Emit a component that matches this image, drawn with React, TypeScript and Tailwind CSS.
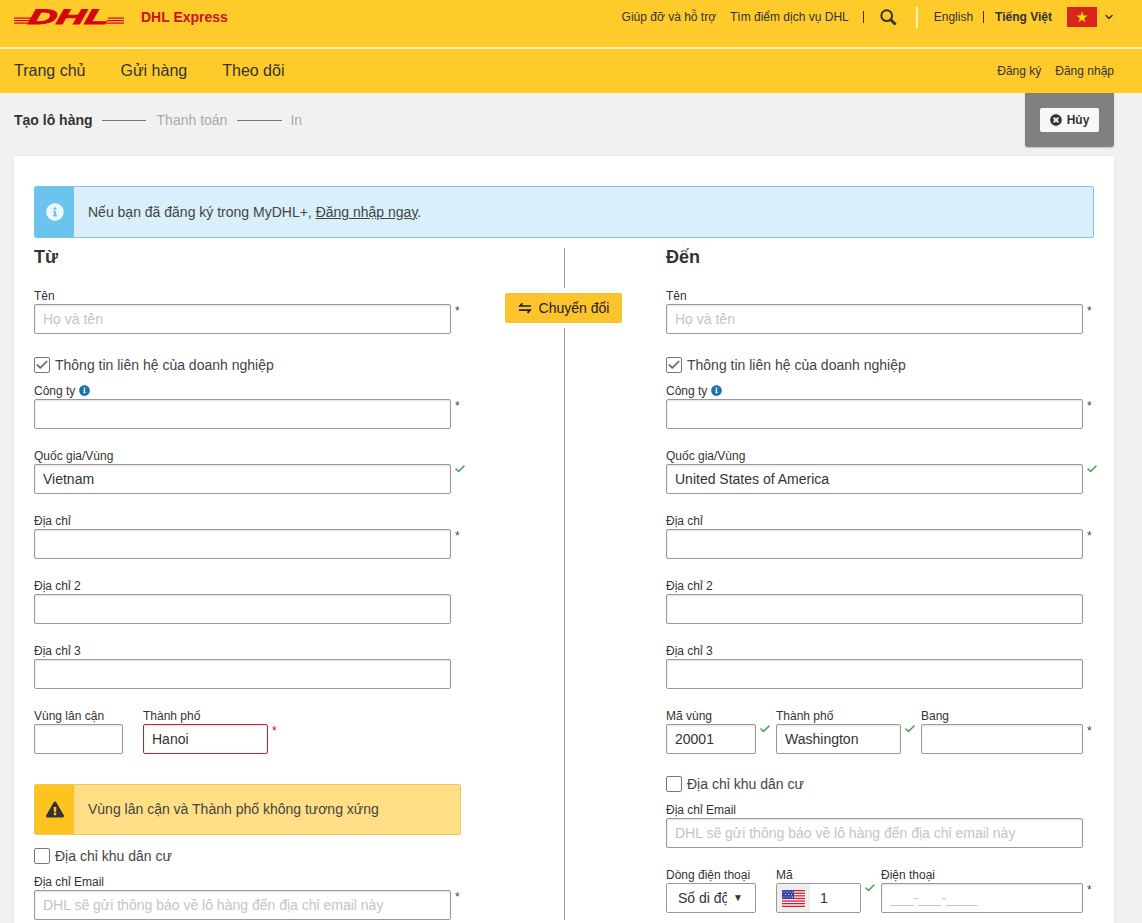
import { ChevronDown, Check } from "lucide-react";
import { FaTimesCircle, FaInfoCircle, FaExclamationTriangle } from "react-icons/fa";

function DhlLogo() {
  return (
    <svg width="111" height="20" viewBox="0 0 111 20" className="shrink-0 overflow-visible">
      <g fill="#d40511">
        <rect x="0" y="10.5" width="17" height="1.2" />
        <rect x="0" y="13" width="16" height="1.2" />
        <rect x="0" y="15.5" width="15" height="1.2" />
        <rect x="94" y="10.5" width="16" height="1.2" />
        <rect x="93" y="13" width="17" height="1.2" />
        <rect x="92" y="15.5" width="18" height="1.2" />
      </g>
      <text
        x="17"
        y="16.5"
        textLength="80"
        lengthAdjust="spacingAndGlyphs"
        transform="skewX(-12)"
        fontFamily="'Liberation Sans', sans-serif"
        fontWeight="700"
        fontStyle="italic"
        fontSize="21"
        fill="#d40511"
        stroke="#d40511"
        strokeWidth="1"
      >
        DHL
      </text>
    </svg>
  );
}

function SearchIcon() {
  return (
    <svg width="17" height="17" viewBox="0 0 17 17" fill="none" stroke="#333" className="shrink-0">
      <circle cx="6.7" cy="6.7" r="5.4" strokeWidth="2" />
      <path d="M10.8 10.8 15.6 15.6" strokeWidth="2.8" />
    </svg>
  );
}

function VnFlag() {
  return (
    <svg width="30" height="20" viewBox="0 0 30 20" className="shrink-0">
      <rect width="30" height="20" fill="#da251d" />
      <polygon points="15,4.5 16.4,8.6 20.6,8.6 17.2,11.2 18.5,15.3 15,12.8 11.5,15.3 12.8,11.2 9.4,8.6 13.6,8.6" fill="#ffde00" />
    </svg>
  );
}

function UsFlag() {
  return (
    <svg width="23" height="17" viewBox="0 0 23 17" className="shrink-0">
      <rect width="23" height="17" fill="#fff" />
      <g fill="#d5182a">
        <rect y="0" width="23" height="1.3" />
        <rect y="2.6" width="23" height="1.3" />
        <rect y="5.2" width="23" height="1.3" />
        <rect y="7.8" width="23" height="1.3" />
        <rect y="10.4" width="23" height="1.3" />
        <rect y="13" width="23" height="1.3" />
        <rect y="15.7" width="23" height="1.3" />
      </g>
      <rect width="12" height="9.1" fill="#3a45a0" />
      <g fill="#c9cdf0">
        <rect x="1.5" y="1.5" width="1" height="1" />
        <rect x="4.5" y="1.5" width="1" height="1" />
        <rect x="7.5" y="1.5" width="1" height="1" />
        <rect x="10" y="1.5" width="1" height="1" />
        <rect x="3" y="4" width="1" height="1" />
        <rect x="6" y="4" width="1" height="1" />
        <rect x="9" y="4" width="1" height="1" />
        <rect x="1.5" y="6.5" width="1" height="1" />
        <rect x="4.5" y="6.5" width="1" height="1" />
        <rect x="7.5" y="6.5" width="1" height="1" />
        <rect x="10" y="6.5" width="1" height="1" />
      </g>
    </svg>
  );
}

function SwapIcon() {
  return (
    <svg width="14" height="12" viewBox="0 0 14 12" fill="none" stroke="#222" strokeWidth="1.7">
      <path d="M13 4H2l2.4-2.6" />
      <path d="M1 8.2h11L9.6 10.8" />
    </svg>
  );
}

function CheckBox({ checked, label }: { checked?: boolean; label: string }) {
  return (
    <div className="flex h-4 items-center gap-[5px] text-sm text-[#444]">
      <span className="flex h-4 w-4 items-center justify-center rounded-[2px] border border-[#777] bg-white">
        {checked && <Check className="h-3.5 w-3.5 text-[#666]" strokeWidth={3} />}
      </span>
      {label}
    </div>
  );
}

function Marker({ type }: { type?: "star" | "ok" | "red" }) {
  if (type === "ok") return <Check className="-mt-px ml-[3px] h-3 w-3 shrink-0 text-[#3fa34d]" strokeWidth={3} />;
  if (type === "star") return <span className="ml-1 text-xs leading-[14px] text-[#444]">*</span>;
  if (type === "red") return <span className="ml-1 text-xs leading-[14px] text-[#d40511]">*</span>;
  return null;
}

function Field({
  label,
  value,
  placeholder,
  marker,
  width = "w-[417px]",
  error,
  info,
}: {
  label: string;
  value?: string;
  placeholder?: string;
  marker?: "star" | "ok" | "red";
  width?: string;
  error?: boolean;
  info?: boolean;
}) {
  return (
    <div>
      <div className="flex h-[17px] items-center gap-1 text-xs text-[#333]">
        {label}
        {info && <FaInfoCircle className="h-[11px] w-[11px] text-[#1a6fb5]" />}
      </div>
      <div className="flex items-start">
        <input
          readOnly
          value={value ?? ""}
          placeholder={placeholder}
          className={`h-[30px] ${width} shrink-0 rounded-[2px] border px-2 text-sm text-[#333] shadow-[inset_0_1px_2px_rgba(0,0,0,0.12)] outline-none placeholder:text-[#c4c4c4] ${
            error ? "border-[#c8232c]" : "border-[#999]"
          }`}
        />
        <Marker type={marker} />
      </div>
    </div>
  );
}

function AddressTop({ title, country }: { title: string; country: string }) {
  return (
    <>
      <h2 className="mt-[9px] h-10 text-lg leading-5 font-bold text-[#333]">{title}</h2>
      <Field label="Tên" placeholder="Họ và tên" marker="star" />
      <div className="mt-[23px] mb-[9px]">
        <CheckBox checked label="Thông tin liên hệ của doanh nghiệp" />
      </div>
      <div className="flex flex-col gap-[18px]">
        <Field label="Công ty" marker="star" info />
        <Field label="Quốc gia/Vùng" value={country} marker="ok" />
        <Field label="Địa chỉ" marker="star" />
        <Field label="Địa chỉ 2" />
        <Field label="Địa chỉ 3" />
      </div>
    </>
  );
}

function FromColumn() {
  return (
    <div>
      <AddressTop title="Từ" country="Vietnam" />
      <div className="mt-[18px] flex gap-5">
        <Field label="Vùng lân cận" width="w-[89px]" />
        <Field label="Thành phố" value="Hanoi" width="w-[125px]" marker="red" error />
      </div>
      <div className="mt-[30px] flex h-[51px] overflow-hidden rounded-[2px] border border-[#ecc95c] bg-[#ffdf85]">
        <div className="flex w-[39px] items-center justify-center bg-[#fdc41f]">
          <FaExclamationTriangle className="h-[17px] w-[18px] text-[#333]" />
        </div>
        <div className="flex items-center pb-px pl-[14px] text-sm text-[#444]">Vùng lân cận và Thành phố không tương xứng</div>
      </div>
      <div className="mt-[13px] mb-[9px]">
        <CheckBox label="Địa chỉ khu dân cư" />
      </div>
      <Field label="Địa chỉ Email" placeholder="DHL sẽ gửi thông báo về lô hàng đến địa chỉ email này" marker="star" />
    </div>
  );
}

function ToColumn() {
  return (
    <div>
      <AddressTop title="Đến" country="United States of America" />
      <div className="mt-[18px] flex">
        <div className="flex w-[110px]">
          <Field label="Mã vùng" value="20001" width="w-[90px]" marker="ok" />
        </div>
        <div className="flex w-[145px]">
          <Field label="Thành phố" value="Washington" width="w-[125px]" marker="ok" />
        </div>
        <Field label="Bang" width="w-[162px]" marker="star" />
      </div>
      <div className="mt-[22px] mb-[9px]">
        <CheckBox label="Địa chỉ khu dân cư" />
      </div>
      <Field label="Địa chỉ Email" placeholder="DHL sẽ gửi thông báo về lô hàng đến địa chỉ email này" />
      <div className="mt-[18px] flex">
        <div className="w-[110px]">
          <div className="flex h-[17px] items-center text-xs text-[#333]">Dòng điện thoại</div>
          <div className="flex h-[30px] w-[90px] items-center rounded-[2px] border border-[#999] pr-[12px] pl-[11px] text-sm text-[#333]">
            <span className="w-[49px] overflow-hidden whitespace-nowrap">Số di động</span>
            <span className="ml-auto text-[10px]">▼</span>
          </div>
        </div>
        <div className="w-[105px]">
          <div className="flex h-[17px] items-center text-xs text-[#333]">Mã</div>
          <div className="flex items-start">
            <div className="flex h-[30px] w-[85px] shrink-0 overflow-hidden rounded-[2px] border border-[#999] text-sm text-[#333]">
              <div className="flex w-[33px] items-center justify-center bg-[#eee]">
                <UsFlag />
              </div>
              <div className="flex items-center pl-[10px]">1</div>
            </div>
            <Marker type="ok" />
          </div>
        </div>
        <Field label="Điện thoại" placeholder="___-___-____" width="w-[202px]" marker="star" />
      </div>
    </div>
  );
}

export default function App() {
  return (
    <div className="h-[923px] overflow-hidden bg-[#f1f1f1] font-['Liberation_Sans',Arial,sans-serif] text-[#333]">
      {/* Top bar */}
      <header className="flex h-[47px] items-start justify-between bg-[#ffcb2b] pt-[6px] pr-[27px] pl-[14px]">
        <div className="flex items-center gap-[16px] pt-[1px]">
          <DhlLogo />
          <span className="text-sm font-bold text-[#c8141c]">DHL Express</span>
        </div>
        <div className="flex h-[22px] items-center text-xs text-[#333]">
          <span>Giúp đỡ và hỗ trợ</span>
          <span className="ml-[14px]">Tìm điểm dịch vụ DHL</span>
          <span className="mr-[16px] ml-[14px] h-[12px] w-px bg-[#333]" />
          <SearchIcon />
          <span className="mr-[16px] ml-[19px] h-[21px] w-[2px] bg-[#fff3b8]" />
          <span>English</span>
          <span className="mr-[11px] ml-[10px] h-[12px] w-px bg-[#333]" />
          <span className="font-bold">Tiếng Việt</span>
          <span className="ml-[15px]">
            <VnFlag />
          </span>
          <ChevronDown className="ml-[6px] h-[12px] w-[12px] text-[#333]" strokeWidth={3} />
        </div>
      </header>
      <div className="h-[2px] bg-[#fff3b8]" />

      {/* Main nav */}
      <nav className="flex h-[44px] items-center justify-between bg-[#ffcb2b] pr-[28px] pl-[14px]">
        <div className="flex gap-[35px] text-base text-[#333]">
          <span>Trang chủ</span>
          <span>Gửi hàng</span>
          <span>Theo dõi</span>
        </div>
        <div className="flex gap-[14px] text-xs text-[#333]">
          <span>Đăng ký</span>
          <span>Đăng nhập</span>
        </div>
      </nav>

      {/* Steps + cancel */}
      <div className="flex h-[63px] items-start justify-between pr-[28px] pl-[14px]">
        <div className="flex h-[54px] items-center text-sm">
          <span className="font-bold text-[#333]">Tạo lô hàng</span>
          <span className="mr-[11px] ml-[9px] h-px w-[44px] bg-[#777]" />
          <span className="text-[#aaa]">Thanh toán</span>
          <span className="mr-[8px] ml-[10px] h-px w-[45px] bg-[#777]" />
          <span className="text-[#aaa]">In</span>
        </div>
        <div className="flex h-[54px] w-[89px] items-center justify-center rounded-b-[3px] bg-[#808080] shadow-[0_1px_2px_rgba(0,0,0,0.2)]">
          <div className="flex h-[24px] w-[59px] items-center justify-center gap-[5px] rounded-[2px] bg-[#f8f8f8] text-xs font-bold text-[#333]">
            <FaTimesCircle className="h-3 w-3 text-[#333]" />
            Hủy
          </div>
        </div>
      </div>

      {/* Form card */}
      <main className="mx-[14px] w-[1100px] rounded-t-[2px] bg-white px-5 pt-[30px] pb-8 shadow-[0_0_3px_rgba(0,0,0,0.08)]">
        <div className="flex h-[52px] overflow-hidden rounded-[2px] border border-[#7cc8da] bg-[#d9f0fa]">
          <div className="flex w-[39px] items-center justify-center bg-[#6cc4ee]">
            <FaInfoCircle className="h-[18px] w-[18px] text-[#eaf7fd]" />
          </div>
          <div className="flex items-center pb-px pl-[14px] text-sm text-[#444]">
            <span>
              Nếu bạn đã đăng ký trong MyDHL+, <span className="underline">Đăng nhập ngay</span>.
            </span>
          </div>
        </div>

        <div className="grid grid-cols-[427px_205px_428px]">
          <FromColumn />
          <div className="mt-[10px] flex flex-col items-center">
            <div className="ml-px h-[40px] w-px bg-[#999]" />
            <div className="my-[5px] flex h-[30px] w-[117px] items-center justify-center gap-[7px] rounded-[2px] bg-[#fdc32d] text-sm text-[#222]">
              <SwapIcon />
              Chuyển đổi
            </div>
            <div className="ml-px w-px flex-1 bg-[#999]" />
          </div>
          <ToColumn />
        </div>
      </main>
    </div>
  );
}
